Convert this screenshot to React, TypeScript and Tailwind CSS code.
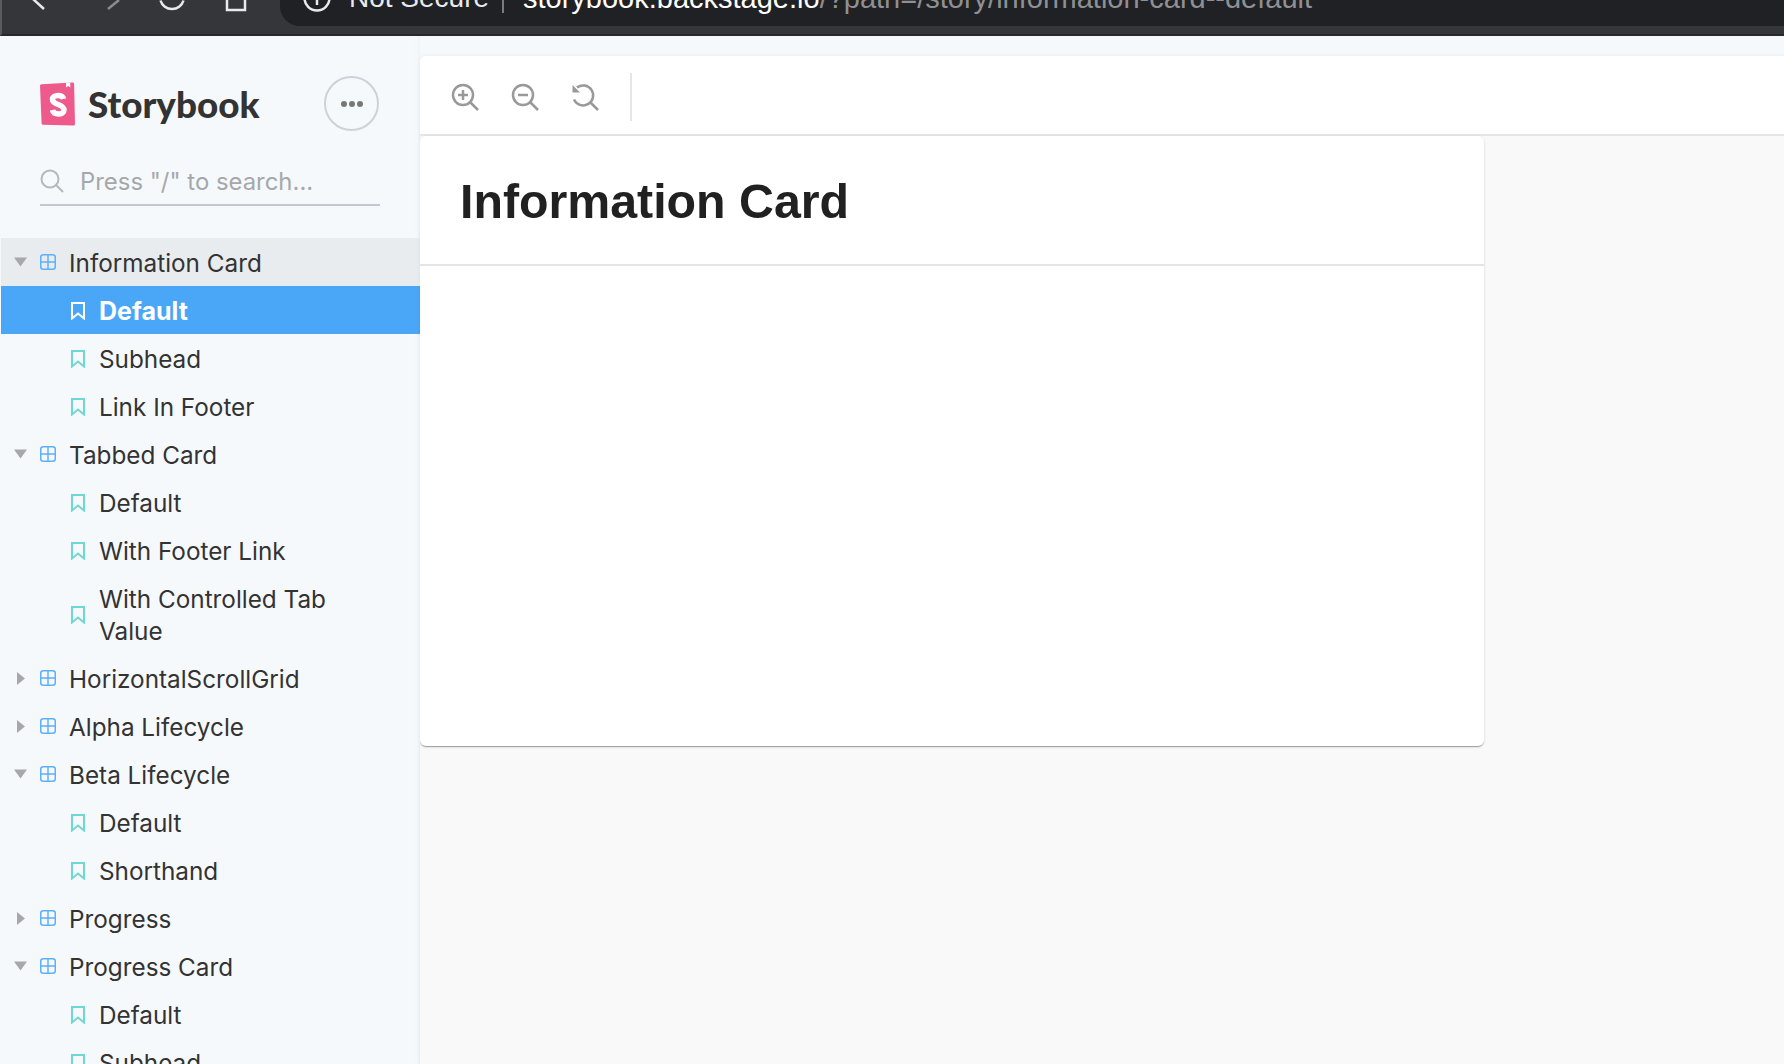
import React from "react";

const inter = "font-['Inter','Noto_Sans',sans-serif]";

function Caret({ open }: { open: boolean }) {
  return (
    <span className="w-[39px] pl-[12px] flex items-center shrink-0">
      {open ? (
        <svg width="15" height="10" viewBox="0 0 15 10"><path d="M1 .5h13L7.500 9.500z" fill="#a8a8a8" /></svg>
      ) : (
        <svg width="10" height="15" viewBox="0 0 10 15" className="ml-[3px]"><path d="M1 1v13l8-6.500z" fill="#a8a8a8" /></svg>
      )}
    </span>
  );
}

function GridIcon() {
  return (
    <svg width="16" height="16" viewBox="0 0 16 16" className="shrink-0" fill="none" stroke="#5eb0fa" strokeWidth="1.500">
      <rect x=".75" y=".75" width="14.500" height="14.500" rx="2.500" />
      <path d="M8 1v14M1 8h14" />
    </svg>
  );
}

function Bookmark({ color }: { color: string }) {
  return (
    <svg width="14" height="18" viewBox="0 0 14 18" className="shrink-0 mt-[1px]" fill="none" stroke={color} strokeWidth="2">
      <path d="M1 1h12v15.500l-6-5-6 5z" />
    </svg>
  );
}

function Group({ label, open, hover }: { label: string; open: boolean; hover?: boolean }) {
  return (
    <div className={`h-[48px] ml-[1px] flex items-center text-[#333] ${hover ? "bg-[#e9ecef]" : ""}`}>
      <Caret open={open} />
      <GridIcon />
      <span className="ml-[13px] pt-[2px]">{label}</span>
    </div>
  );
}

function Story({ label, active }: { label: string; active?: boolean }) {
  return (
    <div className={`ml-[1px] min-h-[48px] py-[7px] flex items-center pl-[70px] pr-[60px] ${active ? "bg-[#4aa6f7] text-white font-bold text-[25px]" : "text-[#333]"}`}>
      <Bookmark color={active ? "#ffffff" : "#6fd8d4"} />
      <span className="ml-[14px] pt-[2px]">{label}</span>
    </div>
  );
}

function ZoomIcon({ mark }: { mark: "plus" | "minus" | "reset" }) {
  return (
    <svg width="28" height="28" viewBox="0 0 28 28" fill="none" stroke="#999" strokeWidth="2.500" className="shrink-0">
      {mark === "reset" ? (
        <>
          <path d="M6 4.500A10 10 0 1 1 3 16.500" />
          <path d="M1.500 2v7.500H9z" fill="#999" stroke="none" />
        </>
      ) : (
        <circle cx="12" cy="12" r="10" />
      )}
      <path d="M19.500 19.500 27 27" />
      {mark !== "reset" && <path d="M7 12h10" />}
      {mark === "plus" && <path d="M12 7v10" />}
    </svg>
  );
}

export default function App() {
  return (
    <div className={`h-[1064px] w-[1784px] overflow-hidden flex flex-col bg-[#f6f9fc] ${inter}`}>
      {/* browser chrome */}
      <header className="h-[36px] shrink-0 bg-[#35363a] border-b-2 border-l-2 border-b-[#27282b] border-l-[#5a5b5e] flex items-start overflow-hidden">
        <div className="w-[278px] shrink-0 h-[26px]">
          <svg width="278" height="26" viewBox="2 0 278 26" fill="none" strokeWidth="2.500" className="block">
            <path d="M33-1l11 10" stroke="#e8eaed" />
            <path d="M108 9l11-9" stroke="#8a8b8e" />
            <path d="M160.500 .5A12 12 0 0 0 183.500 .5" stroke="#e8eaed" />
            <path d="M227-2v12h18V-2" stroke="#e8eaed" />
          </svg>
        </div>
        <div className="flex-1 h-[26px] bg-[#202124] rounded-bl-[20px] overflow-hidden flex items-start pl-[23px] font-['Liberation_Sans',sans-serif] text-[29px] leading-[30px] whitespace-nowrap">
          <div className="-mt-[17px] flex items-center h-[30px]">
            <svg width="28" height="28" viewBox="0 0 28 28" fill="none" stroke="#e8eaed" strokeWidth="2.500" className="shrink-0">
              <circle cx="14" cy="14" r="12.500" />
              <path d="M14 12v9" />
            </svg>
            <span className="ml-[18px] text-[#e8eaed] w-[153px] text-[28px]">Not Secure</span>
            <span className="w-[2px] h-[28px] bg-[#7a7b7e] mt-[2px]" />
            <span className="ml-[19px] text-white">storybook.backstage.io</span>
            <span className="text-[#8e9093]">/?path=/story/information-card--default</span>
          </div>
        </div>
      </header>

      <div className="flex-1 flex min-h-0">
        {/* sidebar */}
        <aside className="w-[420px] shrink-0 overflow-hidden bg-[#f6f9fc] text-[24.3px] leading-[32px] shadow-[inset_-6px_0_6px_-6px_rgba(0,0,0,0.05)]">
          <div className="h-[202px] pl-[40px] pr-[40px] pt-[40px]">
            <div className="h-[55px] flex items-center">
              <svg width="35" height="44" viewBox="0 0 35 44" className="shrink-0">
                <path d="M1.500 2.200 32.500.6a1.500 1.500 0 0 1 1.600 1.400l.9 40a1.500 1.500 0 0 1-1.500 1.500L3 42.800a1.500 1.500 0 0 1-1.400-1.400L0 3.700a1.500 1.500 0 0 1 1.500-1.500z" fill="#ee5a8c" />
                <path d="M26 .7l4.200-.2.2 5-2.200-1.500-2 1.600z" fill="#fff" />
                <path d="M23.500 17c-.5-2.500-3-3.500-5.500-3.500-3 0-5.500 1.500-5.500 4 0 6 11.500 4 11.500 10.500 0 2.500-2.500 4-5.500 4-3 0-5.500-1.500-6-4" fill="none" stroke="#fff" strokeWidth="5.500" />
              </svg>
              <span className="ml-[13px] font-['Lato',sans-serif] font-black text-[36.8px] leading-[44px] text-[#333]">Storybook</span>
              <button className="ml-auto mr-[1px] w-[55px] h-[55px] rounded-full border-2 border-[#ced2d6] flex items-center justify-center gap-[2px]">
                <span className="w-[6px] h-[6px] rounded-full bg-[#777]" />
                <span className="w-[6px] h-[6px] rounded-full bg-[#777]" />
                <span className="w-[6px] h-[6px] rounded-full bg-[#777]" />
              </button>
            </div>
            <div className="mt-[29px] h-[46px] border-b-2 border-[#c4c7cb] flex items-center pb-[2px]">
              <svg width="24" height="24" viewBox="0 0 24 24" fill="none" stroke="#b5b8bb" strokeWidth="2" className="shrink-0">
                <circle cx="10" cy="10" r="8.500" />
                <path d="M16 16l7 7" />
              </svg>
              <span className="ml-[16px] pt-[2px] text-[#a5a8ab] text-[23.9px] whitespace-nowrap">Press "/" to search...</span>
            </div>
          </div>
          <nav>
            <Group label="Information Card" open hover />
            <Story label="Default" active />
            <Story label="Subhead" />
            <Story label="Link In Footer" />
            <Group label="Tabbed Card" open />
            <Story label="Default" />
            <Story label="With Footer Link" />
            <Story label="With Controlled Tab Value" />
            <Group label="HorizontalScrollGrid" open={false} />
            <Group label="Alpha Lifecycle" open={false} />
            <Group label="Beta Lifecycle" open />
            <Story label="Default" />
            <Story label="Shorthand" />
            <Group label="Progress" open={false} />
            <Group label="Progress Card" open />
            <Story label="Default" />
            <Story label="Subhead" />
          </nav>
        </aside>

        {/* main */}
        <main className="flex-1 min-w-0 pt-[20px] flex flex-col">
          <div className="flex-1 bg-[#f9f9f9] rounded-tl-[6px] overflow-hidden shadow-[0_0_4px_rgba(0,0,0,0.06)]">
            <div className="h-[80px] pt-[3px] bg-white border-b-2 border-[#e6e6e6] flex items-center pl-[31px]">
              <ZoomIcon mark="plus" />
              <span className="ml-[32px]"><ZoomIcon mark="minus" /></span>
              <span className="ml-[32px]"><ZoomIcon mark="reset" /></span>
              <span className="ml-[31px] w-[2px] h-[48px] bg-[#e6e6e6]" />
            </div>
            <section className="w-[1064px] h-[610px] bg-white rounded-[6px] shadow-[0_2px_1px_-1px_rgba(0,0,0,0.2),0_1px_1px_0_rgba(0,0,0,0.14),0_1px_3px_0_rgba(0,0,0,0.12)]">
              <div className="h-[130px] border-b-2 border-[#e4e4e4] flex items-center pl-[40px] font-['Liberation_Sans',sans-serif]">
                <h1 className="font-bold text-[48.3px] leading-[56px] text-[#212121] mt-[2px]">Information Card</h1>
              </div>
            </section>
          </div>
        </main>
      </div>
    </div>
  );
}
